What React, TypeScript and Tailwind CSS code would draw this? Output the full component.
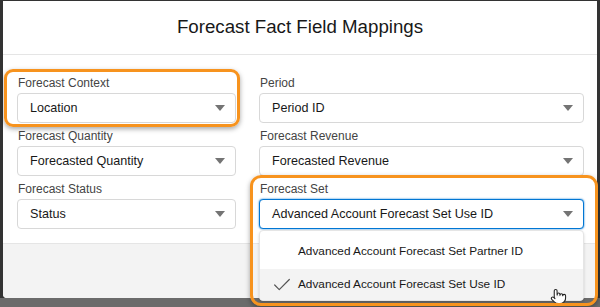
import { Check, Pointer } from 'lucide-react'

const font = { fontFamily: '"Liberation Sans", Arial, sans-serif' }

function Caret() {
  return (
    <svg width="10" height="6" viewBox="0 0 10 6" className="shrink-0">
      <path d="M0 0 L10 0 L5 6 Z" fill="#747474" />
    </svg>
  )
}

function Field({ label, value, active }: { label: string; value: string; active?: boolean }) {
  return (
    <div className="flex flex-col">
      <span className="h-[16px] leading-[16px] text-[12px] text-[#444444] pl-[1px]">{label}</span>
      <div
        className={
          active
            ? 'mt-[2px] h-[30px] flex items-center justify-between pl-[12px] pr-[10px] rounded-[4px] border border-[#0176d3] shadow-[0_0_2px_#0176d3] bg-white'
            : 'mt-[2px] h-[30px] flex items-center justify-between pl-[12px] pr-[10px] rounded-[4px] border border-[#d8d8d8] bg-white'
        }
      >
        <span className="text-[12.6px] text-[#181818]">{value}</span>
        <Caret />
      </div>
    </div>
  )
}

export default function App() {
  return (
    <div className="relative w-[600px] h-[307px] overflow-hidden bg-[#333333]" style={font}>
      <div className="flex flex-col h-full">
        <div className="mt-[1px] ml-[3px] mr-[3px] h-[297px] flex flex-col bg-white rounded-b-[4px]">
          <header className="h-[54px] shrink-0 flex items-center justify-center border-b border-[#e5e5e5]">
            <h1 className="text-[18.7px] text-[#181818]">Forecast Fact Field Mappings</h1>
          </header>
          <div className="grid grid-cols-[219px_325px] gap-x-[23px] gap-y-[5px] pl-[14px] pr-[13px] pt-[20px] pb-[14px]">
            <Field label="Forecast Context" value="Location" />
            <Field label="Period" value="Period ID" />
            <Field label="Forecast Quantity" value="Forecasted Quantity" />
            <Field label="Forecast Revenue" value="Forecasted Revenue" />
            <Field label="Forecast Status" value="Status" />
            <Field label="Forecast Set" value="Advanced Account Forecast Set Use ID" active />
          </div>
          <footer className="flex-1 border-t border-[#e5e5e5] bg-[#f3f3f3] rounded-b-[4px]" />
        </div>
        <div className="flex-1 bg-[#6b6b6b]" />
      </div>

      {/* open listbox */}
      <div className="absolute left-[259px] top-[230px] w-[325px] h-[71px] pt-[4px] bg-white border border-[#e5e5e5] rounded-[4px] shadow-[0_2px_3px_rgba(0,0,0,0.16)] overflow-hidden">
        <div className="h-[34px] flex items-center pl-[38px] text-[11.8px] text-[#181818]">
          Advanced Account Forecast Set Partner ID
        </div>
        <div className="h-[32px] flex items-center bg-[#f3f3f3] text-[11.8px] text-[#181818]">
          <Check size={22} strokeWidth={1.3} className="ml-[11px] mr-[5px] text-[#555555]" />
          Advanced Account Forecast Set Use ID
        </div>
      </div>

      <Pointer
        size={17}
        strokeWidth={1.5}
        fill="white"
        className="absolute left-[550px] top-[288px] text-[#222222]"
      />

      {/* callout highlights */}
      <div className="absolute left-[4px] top-[69px] w-[236px] h-[58px] rounded-[9px] border-[3.5px] border-[#f7931e] shadow-[0_2px_5px_rgba(0,0,0,0.35)]" />
      <div className="absolute left-[250px] top-[175px] w-[348px] h-[131px] rounded-[11px] border-[3.5px] border-[#f7931e] shadow-[0_2px_5px_rgba(0,0,0,0.35)]" />
    </div>
  )
}
